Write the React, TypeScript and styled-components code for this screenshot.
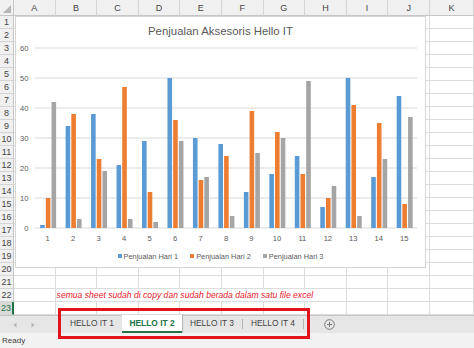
import React from 'react';
import styled, { createGlobalStyle } from 'styled-components';

const GlobalStyle = createGlobalStyle`
  html, body { margin: 0; padding: 0; background: #ffffff; }
  body { font-family: "Liberation Sans", Arial, sans-serif; }
  * { box-sizing: border-box; }
`;

const COL_W = 41.6;
const ROW_H = 13;
const COLUMNS = ['A', 'B', 'C', 'D', 'E', 'F', 'G', 'H', 'I', 'J', 'K'];
const ROWS = Array.from({ length: 23 }, (_, i) => i + 1);

const DATA: [number, number, number][] = [
  [1, 10, 42], [34, 38, 3], [38, 23, 19], [21, 47, 3], [29, 12, 2],
  [50, 36, 29], [30, 16, 17], [28, 24, 4], [12, 39, 25], [18, 32, 30],
  [24, 18, 49], [7, 10, 14], [50, 41, 4], [17, 35, 23], [44, 8, 37],
];
const SERIES = [
  { name: 'Penjualan Hari 1', color: '#5B9BD5' },
  { name: 'Penjualan Hari 2', color: '#ED7D31' },
  { name: 'Penjualan Hari 3', color: '#A5A5A5' },
];

const Window = styled.div`
  position: relative;
  width: 474px;
  height: 348px;
  overflow: hidden;
  display: flex;
  flex-direction: column;
  background: #ffffff;
`;

const Sheet = styled.div`
  position: relative;
  display: grid;
  grid-template-columns: 14px repeat(10, ${COL_W}px) 1fr;
  grid-template-rows: 16px repeat(23, ${ROW_H}px);
  height: 315px;
  flex: none;
`;

const Corner = styled.div`
  background: #f0f0f0;
  border-right: 1px solid #c6c6c6;
  border-bottom: 1px solid #c6c6c6;
  display: flex;
  align-items: flex-end;
  justify-content: flex-end;
  padding: 0 2px 2px 0;
`;

const CornerMark = styled.div`
  width: 0;
  height: 0;
  border-left: 8px solid transparent;
  border-bottom: 8px solid #b8b8b8;
`;

const ColHeader = styled.div`
  background: #f0f0f0;
  border-right: 1px solid #d4d4d4;
  border-bottom: 1px solid #c6c6c6;
  color: #444444;
  font-size: 9px;
  display: flex;
  align-items: center;
  justify-content: center;
`;

const RowHeader = styled.div<{ $selected?: boolean }>`
  background: ${(p) => (p.$selected ? '#d9d9d9' : '#f0f0f0')};
  border-right: ${(p) => (p.$selected ? '2px solid #217346' : '1px solid #c6c6c6')};
  border-bottom: 1px solid #d4d4d4;
  color: ${(p) => (p.$selected ? '#217346' : '#444444')};
  font-size: 9px;
  display: flex;
  align-items: center;
  justify-content: center;
`;

const Cell = styled.div<{ $span?: number }>`
  grid-column: span ${(p) => p.$span ?? 1};
  border-right: 1px solid #dcdcdc;
  border-bottom: 1px solid #dcdcdc;
  background: #ffffff;
  display: flex;
  align-items: center;
  overflow: visible;
  white-space: nowrap;
`;

const Note = styled.span`
  color: #e8202a;
  font-style: italic;
  font-size: 8.6px;
  padding-left: 1px;
`;

const Chart = styled.div`
  position: absolute;
  left: 15px;
  top: 16px;
  width: 411px;
  height: 252px;
  background: #ffffff;
  border: 1px solid #d6d6d6;
  display: flex;
  flex-direction: column;
`;

const ChartTitle = styled.div`
  height: 28px;
  line-height: 28px;
  text-align: center;
  font-size: 11.4px;
  color: #595959;
`;

const Plot = styled.svg`
  display: block;
  width: 409px;
  height: 201px;
  flex: none;
`;

const Legend = styled.div`
  flex: 1;
  display: flex;
  align-items: center;
  justify-content: center;
  gap: 12px;
  font-size: 7.4px;
  color: #595959;
  padding-bottom: 1px;
`;

const LegendItem = styled.div`
  display: flex;
  align-items: center;
  gap: 2px;
`;

const Swatch = styled.span<{ $color: string }>`
  width: 4px;
  height: 4px;
  background: ${(p) => p.$color};
`;

const TabBar = styled.div`
  height: 18px;
  flex: none;
  background: #e6e6e6;
  border-top: 1px solid #c6c6c6;
  display: flex;
  align-items: stretch;
`;

const NavArea = styled.div`
  width: 62px;
  display: flex;
  align-items: center;
  padding-left: 13px;
  gap: 14px;
`;

const Tab = styled.div<{ $active?: boolean }>`
  width: 60px;
  display: flex;
  align-items: center;
  justify-content: center;
  font-size: 8.4px;
  color: ${(p) => (p.$active ? '#217346' : '#444444')};
  font-weight: ${(p) => (p.$active ? 700 : 400)};
  background: ${(p) => (p.$active ? '#ffffff' : 'transparent')};
  border-bottom: ${(p) => (p.$active ? '2px solid #217346' : '2px solid transparent')};
  box-shadow: ${(p) => (p.$active ? '1px 0 1px rgba(0,0,0,0.18)' : 'none')};
  margin-top: -1px;
`;

const Separator = styled.div`
  width: 1px;
  margin: 3px 0 4px;
  background: #b4b4b4;
`;

const AddButton = styled.div`
  margin-left: 20px;
  display: flex;
  align-items: center;
`;

const StatusBar = styled.div`
  flex: 1;
  background: #f2f2f2;
  display: flex;
  align-items: center;
  padding-left: 2px;
  font-size: 8px;
  color: #404040;
`;

const Highlight = styled.div`
  position: absolute;
  left: 58px;
  top: 308px;
  width: 252px;
  height: 31px;
  border: 3px solid #e3131c;
  pointer-events: none;
`;

const PLOT_L = 19;
const PLOT_R = 401;
const CAT_W = (PLOT_R - PLOT_L) / 15;
const Y0 = 183;
const UNIT = 3;

function ChartPlot() {
  return (
    <Plot viewBox="0 0 409 201">
      {[0, 10, 20, 30, 40, 50, 60].map((v) => (
        <g key={v}>
          <line x1={PLOT_L} x2={PLOT_R} y1={Y0 - v * UNIT} y2={Y0 - v * UNIT} stroke="#d9d9d9" strokeWidth={1} />
          <text x={12.5} y={Y0 - v * UNIT + 2.7} fontSize={7.6} fill="#595959" textAnchor="end" fontFamily="Liberation Sans, Arial, sans-serif">{v}</text>
        </g>
      ))}
      {DATA.map((vals, i) => {
        const c = PLOT_L + CAT_W * (i + 0.5);
        return (
          <g key={i}>
            {vals.map((v, k) => (
              <rect key={k} x={c - 7.6 + k * 5.7} y={Y0 - v * UNIT} width={4.6} height={v * UNIT} fill={SERIES[k].color} />
            ))}
            <text x={c} y={196} fontSize={7.6} fill="#595959" textAnchor="middle" fontFamily="Liberation Sans, Arial, sans-serif">{i + 1}</text>
          </g>
        );
      })}
    </Plot>
  );
}

function Arrow({ dir }: { dir: 'left' | 'right' }) {
  return (
    <svg width="4" height="6" viewBox="0 0 4 6">
      <path d={dir === 'left' ? 'M3.5 0.5 L0.5 3 L3.5 5.5 Z' : 'M0.5 0.5 L3.5 3 L0.5 5.5 Z'} fill="#b5b5b5" />
    </svg>
  );
}

export default function App() {
  return (
    <>
      <GlobalStyle />
      <Window>
        <Sheet>
          <Corner><CornerMark /></Corner>
          {COLUMNS.map((c) => <ColHeader key={c}>{c}</ColHeader>)}
          {ROWS.map((r) => (
            <React.Fragment key={r}>
              <RowHeader $selected={r === 23}>{r}</RowHeader>
              {r === 22 ? (
                <>
                  <Cell />
                  <Cell $span={7}><Note>semua sheet sudah di copy dan sudah berada dalam satu file excel</Note></Cell>
                  <Cell />
                  <Cell />
                  <Cell />
                </>
              ) : (
                COLUMNS.map((c) => <Cell key={c} />)
              )}
            </React.Fragment>
          ))}
          <Chart>
            <ChartTitle>Penjualan Aksesoris Hello IT</ChartTitle>
            <ChartPlot />
            <Legend>
              {SERIES.map((s) => (
                <LegendItem key={s.name}>
                  <Swatch $color={s.color} />
                  {s.name}
                </LegendItem>
              ))}
            </Legend>
          </Chart>
        </Sheet>
        <TabBar>
          <NavArea>
            <Arrow dir="left" />
            <Arrow dir="right" />
          </NavArea>
          <Tab>HELLO IT 1</Tab>
          <Tab $active>HELLO IT 2</Tab>
          <Tab>HELLO IT 3</Tab>
          <Separator />
          <Tab>HELLO IT 4</Tab>
          <Separator />
          <AddButton>
            <svg width="11" height="11" viewBox="0 0 11 11">
              <circle cx="5.5" cy="5.5" r="4.8" fill="none" stroke="#7a7a7a" strokeWidth="1" />
              <path d="M5.5 3 V8 M3 5.5 H8" stroke="#7a7a7a" strokeWidth="1" />
            </svg>
          </AddButton>
        </TabBar>
        <StatusBar>Ready</StatusBar>
        <Highlight />
      </Window>
    </>
  );
}
